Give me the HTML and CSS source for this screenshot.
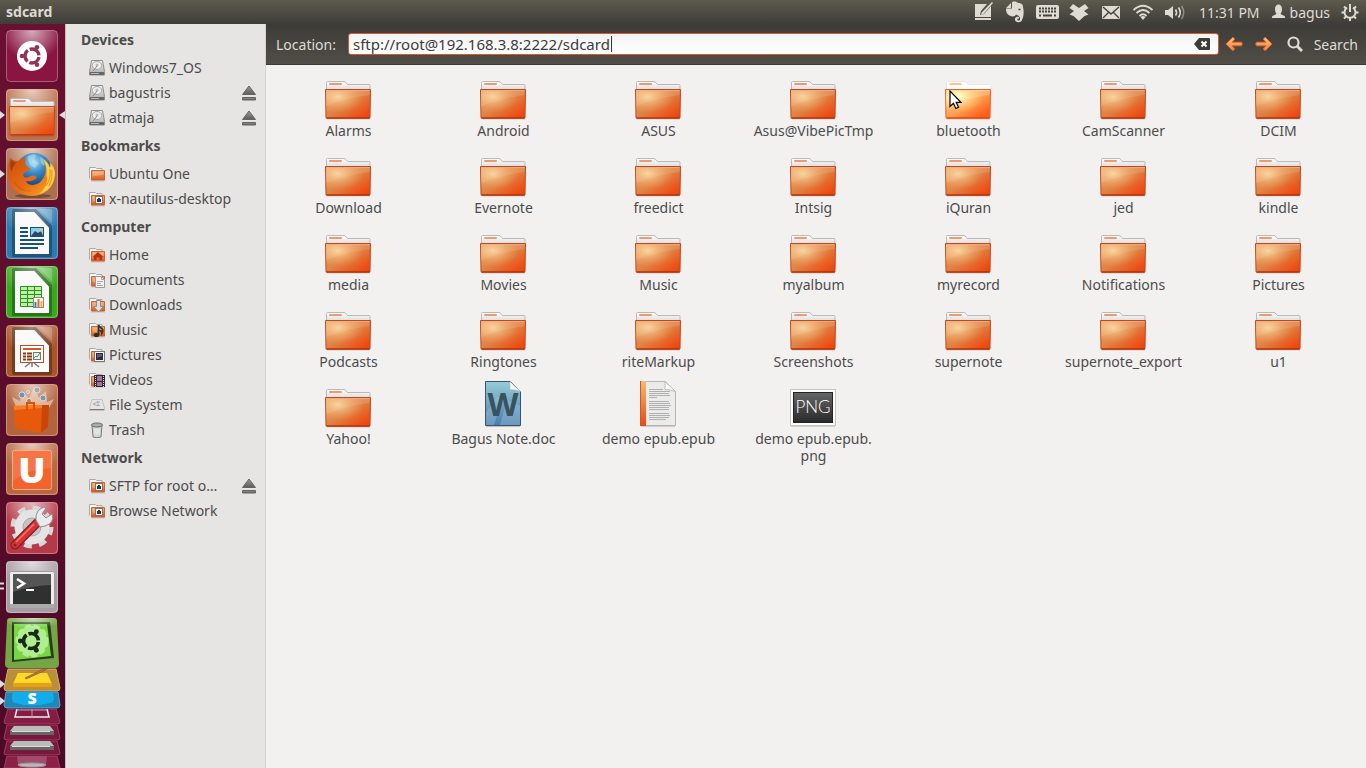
FILE: index.html
```html
<!DOCTYPE html>
<html lang="en">
<head>
  <meta charset="UTF-8">
  <title>sdcard</title>
  <meta name="viewport" content="width=device-width, initial-scale=1.0">
  <link rel="stylesheet" href="styles.css">
</head>
<body>
  <!-- Shared gradients and icons -->
  <svg class="defs" aria-hidden="true">
    <defs>
      <linearGradient id="g-folder" x1="0" y1="0" x2="1" y2="1">
        <stop offset="0" stop-color="#e9a866"/><stop offset=".5" stop-color="#e08143"/><stop offset=".85" stop-color="#ee4e15"/><stop offset="1" stop-color="#d9481a"/>
      </linearGradient>
      <radialGradient id="g-glow" cx=".27" cy=".25" r=".6">
        <stop offset="0" stop-color="#fbdfab" stop-opacity=".85"/><stop offset="1" stop-color="#f5a868" stop-opacity="0"/>
      </radialGradient>
      <linearGradient id="g-tab" x1="0" y1="0" x2="0" y2="1"><stop offset="0" stop-color="#fff"/><stop offset="1" stop-color="#dcdcdc"/></linearGradient>
      <linearGradient id="g-small" x1="0" y1="0" x2="0" y2="1"><stop offset="0" stop-color="#f0a773"/><stop offset="1" stop-color="#dc5a1c"/></linearGradient>
      <linearGradient id="g-metal" x1="0" y1="0" x2="0" y2="1"><stop offset="0" stop-color="#f4f4f4"/><stop offset="1" stop-color="#a9a9a9"/></linearGradient>
      <linearGradient id="g-eject" x1="0" y1="0" x2="0" y2="1"><stop offset="0" stop-color="#999"/><stop offset="1" stop-color="#5c5c5c"/></linearGradient>
      <linearGradient id="g-arrow" x1="0" y1="0" x2="0" y2="1"><stop offset="0" stop-color="#ffc27e"/><stop offset="1" stop-color="#f2803b"/></linearGradient>
      <radialGradient id="g-shine" cx=".5" cy="0" r=".6"><stop offset="0" stop-color="#fff" stop-opacity=".65"/><stop offset="1" stop-color="#fff" stop-opacity="0"/></radialGradient>
      <linearGradient id="g-doc" x1="0" y1="0" x2="0" y2="1"><stop offset="0" stop-color="#97ccd6"/><stop offset="1" stop-color="#4b7daf"/></linearGradient>
      <linearGradient id="g-strip" x1="0" y1="0" x2="0" y2="1"><stop offset="0" stop-color="#f0bd72"/><stop offset="1" stop-color="#e84a12"/></linearGradient>
      <linearGradient id="g-dark" x1="0" y1="0" x2="0" y2="1"><stop offset="0" stop-color="#666"/><stop offset="1" stop-color="#292929"/></linearGradient>
      <radialGradient id="g-globe" cx=".5" cy=".25" r=".7"><stop offset="0" stop-color="#a9dcf2"/><stop offset=".45" stop-color="#3589c6"/><stop offset="1" stop-color="#153c7c"/></radialGradient>
      <linearGradient id="g-fox" x1="0" y1="0" x2="1" y2="1"><stop offset="0" stop-color="#c9500f"/><stop offset=".55" stop-color="#e96b14"/><stop offset="1" stop-color="#fbb226"/></linearGradient>
    </defs>

    <symbol id="folder" viewBox="0 0 48 48" preserveAspectRatio="xMinYMid">
      <path d="M3 46.500h43v1H3z" fill="#000" opacity=".15"/>
      <path d="M2.500 18v-7.500q0-1 1-1h16.500q1 0 2 1.200l1.500 1.800h21.500q1 0 1 1v4.500z" fill="url(#g-tab)" stroke="#b9b9b9"/>
      <rect x="5" y="11" width="13" height="2" rx="1" fill="#eb9b6e"/>
      <path d="M1.500 17.500h45L46 45.500q0 1-1 1H3q-1 0-1-1z" fill="url(#g-folder)" stroke="#c2481d"/>
      <path d="M2 18h44l-.5 5Q23 26 2 34z" fill="#fff" opacity=".12"/>
      <path d="M2 18h44v27H2z" fill="url(#g-glow)"/>
      <path d="M2.500 18.500h43" stroke="#f3ac83" opacity=".8"/>
      <path d="M2.500 45.500h43" stroke="#a8300a" opacity=".7"/>
    </symbol>

    <symbol id="s-folder" viewBox="0 0 16 16">
      <path d="M.5 12.500V1.500h6l1 1h5.500V5" fill="#fafafa" stroke="#a9a9a9"/>
      <path d="M2.500 4.500h13v9.500h-13z" fill="url(#g-small)" stroke="#d0602f"/>
      <path d="M3.500 5.500h11v3l-11 2z" fill="#ffd7a6" opacity=".4"/>
      <path d="M2 15h14" stroke="#8c8c8c" opacity=".4"/>
    </symbol>
    <symbol id="s-remote" viewBox="0 0 16 16">
      <use href="#s-folder"/>
      <rect x="6.500" y="5.500" width="7" height="7" fill="#f4f4f4" stroke="#777"/>
      <path d="M8 8h1V7h2v1h1v3H8z" fill="#333"/>
    </symbol>
    <symbol id="s-home" viewBox="0 0 16 16">
      <use href="#s-folder"/>
      <path d="M9 5l5.500 5H13v3h-2.500v-2.500h-3V13H5v-3H3.500z" fill="#b92f10"/>
    </symbol>
    <symbol id="s-documents" viewBox="0 0 16 16">
      <use href="#s-folder"/>
      <path d="M6.500 4.500h6l3 3v8h-9z" fill="#f2f2f2" stroke="#9b9b9b"/>
      <path d="M12.500 4.500v3h3M8 9.500h6M8 11.500h4M8 13.500h6" fill="none" stroke="#a8a8a8"/>
    </symbol>
    <symbol id="s-downloads" viewBox="0 0 16 16">
      <use href="#s-folder"/>
      <path d="M7.500 3.500h4v6h3l-5 5.500-5-5.500h3z" fill="#dedede" stroke="#8c8c8c"/>
    </symbol>
    <symbol id="s-music" viewBox="0 0 16 16">
      <use href="#s-folder"/>
      <path d="M9.500 13V3q1 2.500 3.500 3.500 1.500 2 0 4.500 0-2-3-3" fill="none" stroke="#333" stroke-width="1.800"/>
      <ellipse cx="7.500" cy="13" rx="2.800" ry="2" fill="#2c2c2c"/>
    </symbol>
    <symbol id="s-pictures" viewBox="0 0 16 16">
      <use href="#s-folder"/>
      <rect x="5.500" y="4.500" width="10" height="10" fill="#f2f2f2" stroke="#777"/>
      <rect x="7" y="6" width="7" height="7" fill="#33283e"/><path d="M8 7h5v2L8 11z" fill="#6a5b78"/>
    </symbol>
    <symbol id="s-videos" viewBox="0 0 16 16">
      <use href="#s-folder"/>
      <rect x="5" y="3" width="11" height="12" fill="#2e2833"/>
      <path d="M8 4h5v5H8zM8 10h5v4H8z" fill="#a374a0"/>
      <path d="M6.500 4v11M14.500 4v11" stroke="#ddd" stroke-dasharray="1 1"/>
    </symbol>
    <symbol id="s-drive" viewBox="0 0 16 16">
      <path d="M2.500.5h11l2 11v3.500H.5v-3.500z" fill="url(#g-metal)" stroke="#8d8d8d"/>
      <ellipse cx="8" cy="5.500" rx="4.800" ry="4" fill="#ededed" stroke="#aaa"/>
      <circle cx="8" cy="5" r="1.500" fill="#bbb"/>
      <path d="M4 11l4-5" stroke="#888"/>
      <path d="M1 12h14v3H1z" fill="#666"/><path d="M2 13.500h8" stroke="#bbb"/>
    </symbol>
    <symbol id="s-filesystem" viewBox="0 0 16 16">
      <path d="M3 2.500h10l2.500 8.500v2.500H.5V11z" fill="#e5e5e5" stroke="#c3c3c3"/>
      <path d="M4 7l5-2.500v4.500zM8 5h3M8 8.500h3" fill="none" stroke="#adadad"/>
      <path d="M1 12.500h14" stroke="#777"/>
    </symbol>
    <symbol id="s-trash" viewBox="0 0 16 16">
      <path d="M3 3h10l-1 12q-4 1.500-8 0z" fill="#d2d3d3" stroke="#7c7f80"/>
      <ellipse cx="8" cy="3" rx="5.500" ry="2" fill="#a9adad" stroke="#6c7071"/>
      <path d="M6 6.500v6M8 6.500v6.500M10 6.500v6" stroke="#f4f4f4"/>
    </symbol>
    <symbol id="eject" viewBox="0 0 16 16">
      <path d="M8 1l6.500 8.500h-13z" fill="url(#g-eject)" stroke="#646464"/>
      <path d="M1.500 12.500h13v2.500h-13z" fill="url(#g-eject)" stroke="#646464"/>
    </symbol>

    <!-- Launcher pieces -->
    <symbol id="gloss" viewBox="0 0 65 59">
      <rect x="6.500" y="3.500" width="51" height="51" rx="4" fill="url(#g-shine)" stroke="#fff" stroke-opacity=".3"/>
    </symbol>
    <symbol id="cof" viewBox="0 0 30 30">
      <circle cx="15" cy="15" r="7" fill="none" stroke="currentColor" stroke-width="3.400" stroke-dasharray="12.700 2" stroke-dashoffset="-1"/>
      <circle cx="5" cy="15" r="2.300" fill="currentColor"/><circle cx="20" cy="6.300" r="2.300" fill="currentColor"/><circle cx="20" cy="23.700" r="2.300" fill="currentColor"/>
    </symbol>
    <symbol id="page" viewBox="0 0 65 59">
      <path d="M14 5h22l16 17v29q0 2-2 2H14q-2 0-2-2V7q0-2 2-2z" fill="#000" opacity=".3"/>
      <path d="M15 8h19l15 16v26H15z" fill="#fafafa"/>
      <path d="M39 5h11q2 0 2 2v12z" fill="#fff" opacity=".2"/>
      <path d="M34 8l15 16" stroke="#fff" opacity=".6"/>
    </symbol>
    <symbol id="pip" viewBox="0 0 5 8"><path d="M0 0l5 4-5 4z" fill="#ddd"/></symbol>
  </svg>

  <header class="panel">
    <h1 class="panel-title">sdcard</h1>
    <div class="indicators">
      <button class="indicator" aria-label="Notes"><svg viewBox="0 0 24 24"><path d="M4 4h12l-6 7-1 4 4-1 7-8v11H4z"/><path d="M21 2l1 1-9.500 11-2.500 1 .7-2.500z"/><path d="M4 19h16" stroke="#dfdbd2" stroke-width="2"/></svg></button>
      <button class="indicator" aria-label="Evernote"><svg viewBox="0 0 24 24"><path d="M3 8l5-5v5zM9 2c3-1 5 0 6 1 3 0 5 1 5 4 1 4 1 9-1 13-1 3-6 3-7 0-.5-3 2-4 4-3v1.500c-2-.5-2.500 2 0 2 2-1 1-4-1-5l-2-1c-1 3-6 2-8 0-2-2-2-4-2-6h6z"/><path d="M15.500 9.500h2" stroke="#45433e" stroke-width="1.500"/></svg></button>
      <button class="indicator" aria-label="Keyboard"><svg viewBox="0 0 24 24"><rect x="1" y="5" width="23" height="14" rx="2"/><path d="M4 8.500h17M4 11.500h17" stroke="#45433e" stroke-width="2" stroke-dasharray="2 1"/><path d="M4 15.500h2m2 0h9m2 0h2" stroke="#45433e" stroke-width="2"/></svg></button>
      <button class="indicator" aria-label="Dropbox"><svg viewBox="0 0 24 24"><path d="M6 4l6 4 6-4 3.500 4-4.500 3 4.500 3.500-4 1.500-5.500 5-5.500-5-4-1.500L7 11 2.500 8z"/></svg></button>
      <button class="indicator" aria-label="Mail"><svg viewBox="0 0 24 24"><rect x="3" y="6" width="18" height="13" rx="1"/><path d="M4 7l8 7 8-7M4 18l6-6M20 18l-6-6" fill="none" stroke="#45433e" stroke-width="1.400"/></svg></button>
      <button class="indicator" aria-label="Wireless network"><svg viewBox="0 0 24 24"><g fill="none" stroke="#dfdbd2" stroke-width="1.800"><path d="M2.500 10Q12 1.500 21.500 10M5.500 13Q12 7 18.500 13M8.500 16Q12 12.500 15.500 16"/></g><path d="M9.500 17q2.500-2 5 0L12 20z"/></svg></button>
      <button class="indicator" aria-label="Sound"><svg viewBox="0 0 24 24"><path d="M2 10h3l5-4v13l-5-4H2z"/><g fill="none" stroke="#dfdbd2" stroke-width="1.600"><path d="M12.500 9.500q2 3 0 6M15.500 7.500q3.500 5 0 10"/><path d="M18.500 6q4.500 6.500 0 13" opacity=".45"/></g></svg></button>
      <button class="indicator clock">11:31 PM</button>
      <button class="indicator user"><svg viewBox="0 0 16 24"><path d="M5 9c0-6 7-6 7 0 0 3-1 4-1.500 5l4 2q1 1 .5 2H2q-.5-1 .5-2l4-2C6 13 5 12 5 9z"/></svg>bagus</button>
      <button class="indicator gear" aria-label="System"><svg viewBox="0 0 18 24"><g fill="none" stroke="#dfdbd2" stroke-width="2"><path d="M6 7.700a5.500 5.500 0 1 0 6 0M9 4v8"/><path d="M.5 12.500h3M14.500 12.500h3M9 18v3M3 6.500l2 2M15 6.500l-2 2M3 18.500l2-2M15 18.500l-2-2"/></g></svg></button>
    </div>
  </header>

  <div class="desktop">
    <nav class="launcher" aria-label="Launcher">
      <button aria-label="Dash"><svg width="65" height="59" viewBox="0 0 65 59"><rect x="6" y="3" width="52" height="52" rx="5" fill="#8a1540"/><use href="#gloss"/><circle cx="32" cy="29" r="15" fill="#fff"/><svg x="17" y="14" width="30" height="30" color="#91345a"><use href="#cof"/></svg></svg></button>
      <button aria-label="Files"><svg width="65" height="59" viewBox="0 0 65 59"><rect x="6" y="3" width="52" height="52" rx="4" fill="#bc714c"/><use href="#gloss"/><use href="#folder" x="8" y="3" width="48" height="48"/><use href="#pip" y="25" width="5" height="8"/><path d="M65 25v8l-6-4z" fill="#ddd"/></svg></button>
      <button aria-label="Firefox"><svg width="65" height="59" viewBox="0 0 65 59"><rect x="6" y="3" width="52" height="52" rx="4" fill="#ad6f50"/><use href="#gloss"/>
        <ellipse cx="33" cy="51" rx="18" ry="2" fill="#000" opacity=".3"/>
        <circle cx="34" cy="26" r="18" fill="url(#g-globe)"/>
        <path d="M27 12q5-4 9-2l-2 5 5 3-4 5-5-3zM40 12l6 4-2 5-3-3z" fill="#c3e6f3" opacity=".5"/>
        <path d="M10 13Q7 24 8 30q2 20 24 21 21-1 23-23-1-7-5-10 1 3 0 5-2-6-7-9 4 8 2 15-3 10-12 11-6 0-7-4 8 1 11-4-4-3-8 0-5 2-6-2 1-3 8-6-5-3-6-6v-6q-5 2-7 4-5 0-8-3z" fill="url(#g-fox)"/>
        <path d="M43 14q5 3 7 9 1-2 0-5 4 3 5 10-1 17-16 21 10-8 8-19l-1 3q2-11-3-19z" fill="#fbd04a"/>
        <path d="M50 24q1 10-4 17M52 25q1 9-3 16" fill="none" stroke="#e98c1c"/>
        <path d="M11 15l5 3q-4 4-4 9-3-5-1-12z" fill="#a83c0c"/>
        <path d="M14 36q6 10 18 10-8 1-13-3t-5-7z" fill="#b94a0c" opacity=".5"/>
        <use href="#pip" y="25" width="5" height="8"/></svg></button>
      <button aria-label="LibreOffice Writer"><svg width="65" height="59" viewBox="0 0 65 59"><rect x="6" y="3" width="52" height="52" rx="4" fill="#2b7bb0"/><use href="#gloss"/><use href="#page"/><path d="M20 24h8M20 28h8M20 32h8M20 36h24M20 40h24M20 44h18" stroke="#15517c" stroke-width="2"/><rect x="30.500" y="23.500" width="13" height="9" fill="#8ecbf0" stroke="#15517c"/><path d="M31 32l4-5 3 2 3-2 2 5z" fill="#214c64"/><circle cx="41" cy="26" r="1.500" fill="#ffc240"/></svg></button>
      <button aria-label="LibreOffice Calc"><svg width="65" height="59" viewBox="0 0 65 59"><rect x="6" y="3" width="52" height="52" rx="4" fill="#38a91f"/><use href="#gloss"/><use href="#page"/><path d="M20.500 23.500h21v20h-21zM20 27.500h22M20 31.500h22M20 35.500h22M20 39.500h22M27.500 23v21M34.500 23v21" fill="#bcf0a8" stroke="#2a9216"/><rect x="33.500" y="34.500" width="10" height="10" fill="#fff" stroke="#888"/><path d="M34.500 39h2v5h-2z" fill="#2d7ec1"/><path d="M37.500 36h2v8h-2z" fill="#e46a25"/><path d="M40.500 38h2v6h-2z" fill="#efad38"/></svg></button>
      <button aria-label="LibreOffice Impress"><svg width="65" height="59" viewBox="0 0 65 59"><rect x="6" y="3" width="52" height="52" rx="4" fill="#a9552a"/><use href="#gloss"/><use href="#page"/><rect x="20.500" y="23.500" width="23" height="17" fill="#fff" stroke="#b84d1b"/><path d="M23 27h18" stroke="#d15b21" stroke-width="2"/><path d="M23 31.500h3m1 0h5M23 34.500h3m1 0h5M23 37.500h3m1 0h5" stroke="#8e3510" stroke-width="2"/><rect x="33.500" y="30.500" width="7" height="7" fill="#eee" stroke="#777"/><path d="M34 36l2-2 1 1 3-4" fill="none" stroke="#38a927"/><path d="M32 41v4M30 41l-5 4M34 41l5 4" stroke="#777" stroke-width="1.500"/></svg></button>
      <button aria-label="Software Center"><svg width="65" height="59" viewBox="0 0 65 59"><rect x="6" y="3" width="52" height="52" rx="4" fill="#b3643e"/><use href="#gloss"/>
        <path d="M16 26l-4-10 8 4 2-10 7 7 5-11 5 11 7-7 1 11 7-3-5 9z" fill="#ffe9d0" opacity=".5"/>
        <g stroke="#edf4f7" stroke-width=".7"><circle cx="22" cy="14" r="3" fill="#6a96b4"/><circle cx="37" cy="9" r="3" fill="#a1aab0"/><circle cx="43" cy="17" r="3" fill="#779aac"/><circle cx="29" cy="20" r="2.500" fill="#ad7d67"/><circle cx="28" cy="11" r="1.500" fill="#d3a895"/></g>
        <path d="M14 25l35-1-1 22-7 6-26-5z" fill="#e75a0c"/><path d="M42 24h7l-1 22-7 6z" fill="#c94609"/><path d="M14 25l28-1v3l-28 2z" fill="#fb7a25"/>
        <path d="M27 30v-8h7v7" fill="none" stroke="#e45000" stroke-width="2"/></svg></button>
      <button aria-label="Ubuntu One"><svg width="65" height="59" viewBox="0 0 65 59"><rect x="6" y="3" width="52" height="52" rx="4" fill="#b96841"/><use href="#gloss"/><rect x="12.500" y="10.500" width="39" height="39" rx="2" fill="#f4622d" stroke="#ffae7e"/><path d="M13 11h38v17q-23 1-38 13z" fill="#fff" opacity=".12"/><text class="u-logo" x="32" y="43" text-anchor="middle">U</text></svg></button>
      <button aria-label="System Settings"><svg width="65" height="59" viewBox="0 0 65 59"><rect x="6" y="3" width="52" height="52" rx="4" fill="#b53a49"/><use href="#gloss"/>
        <circle cx="32" cy="28" r="18.500" fill="none" stroke="#d6d8d8" stroke-width="6" stroke-dasharray="7.500 7.030"/>
        <circle cx="32" cy="28" r="13" fill="none" stroke="#e4e4e4" stroke-width="9"/><circle cx="32" cy="28" r="9" fill="#c5c5c5" stroke="#a7a7a7"/>
        <path d="M15 46l22-22" stroke="#8d1d1f" stroke-width="9" stroke-linecap="round"/><path d="M15 46l22-22" stroke="#d53334" stroke-width="6.500" stroke-linecap="round"/><path d="M16 43l18-18" stroke="#f07a73" stroke-width="1.500"/>
        <path d="M36 21q-1-10 8-13l2 1-4 6 4 4 6-4q3 9-7 12l-5 1z" fill="#ebebeb" stroke="#8e8e8e"/><circle cx="15" cy="46" r="1.500" fill="#911f20"/></svg></button>
      <button aria-label="Terminal"><svg width="65" height="59" viewBox="0 0 65 59"><rect x="6" y="3" width="52" height="52" rx="4" fill="#a79ca3"/><use href="#gloss"/><rect x="9.500" y="13.500" width="45" height="36" rx="2" fill="#eee" stroke="#9b9b9b"/><path d="M10 46h44v4H10z" fill="#aaa"/><rect x="13" y="16" width="38" height="30" fill="#303030"/><path d="M13 16h38v11q-22 1-38 7z" fill="#555"/><path d="M17 21l7 4.500-7 4.500" fill="none" stroke="#fff" stroke-width="2.500"/><path d="M26 32h8" stroke="#fff" stroke-width="2"/><path d="M0 25.500h4M0 30.500h4" stroke="#ddd" stroke-width="2"/></svg></button>
      <!-- Folded tiles at the bottom of the launcher -->
      <button aria-label="Ubuntu Tweak"><svg width="65" height="51" viewBox="0 0 65 51"><path d="M10 1h44q3 0 3 3l2 43q0 4-4 4H9q-4 0-4-4L7 4q0-3 3-3z" fill="#75a645"/><path d="M12 5h38l4 36-42 4z" fill="#273d1b"/><path d="M14 7h33l4 32-37 4z" fill="#77d642"/><circle cx="32" cy="24" r="15" fill="#b0ee91" stroke="#b0ee91" stroke-width="3" stroke-dasharray="6 3"/><svg x="15" y="8" width="32" height="32" color="#1b2816"><use href="#cof"/></svg><path d="M10 1h44q3 0 3 3l1 15H7L8 4q0-3 2-3z" fill="url(#g-shine)"/></svg></button>
      <button aria-label="Sticky Notes"><svg width="65" height="24" viewBox="0 0 65 24"><path d="M8 1h48l4 19q0 3-3 3H7q-3 0-3-3z" fill="#b8903c" stroke="#d1af62"/><path d="M18 5h29l5 11H13z" fill="#ffd927"/><path d="M13 15h39v4H13z" fill="#e9a013"/><path d="M25 10l18-9 5-1-4 3-18 8z" fill="#bb7742" stroke="#6f4428" stroke-width=".5"/><use href="#pip" y="12" width="5" height="8"/></svg></button>
      <button aria-label="Skype"><svg class="skype" width="65" height="17" viewBox="0 0 65 17"><path d="M6 0h52l2 13q0 3-3 3H7q-3 0-3-3z" fill="#2386b4" stroke="#4fa6ce"/><path d="M13 0h39q5 9-2 11-18 5-35 0-5-2-2-11z" fill="#10acec"/><text class="s-logo" x="32" y="12" text-anchor="middle">S</text><use href="#pip" y="5" width="5" height="8"/></svg></button>
      <button aria-label="Workspaces"><svg width="65" height="16" viewBox="0 0 65 16"><path d="M8 0h48l4 13q0 2-3 2H7q-3 0-3-2z" fill="#851c44" stroke="#a13d60"/><path d="M17 0l-2 8h34l-2-8" fill="none" stroke="#eee" stroke-width="1.500"/><path d="M32 0v8M17 1h30" stroke="#c99aae"/></svg></button>
      <button aria-label="Drive"><svg width="65" height="16" viewBox="0 0 65 16"><path d="M7 0h50l3 13q0 2-3 2H7q-3 0-3-2z" fill="#7a173d" stroke="#a13d60"/><path d="M14 1h36l4 5H10z" fill="#bbb"/><path d="M10 6h44v4H10z" fill="#666"/><path d="M12 6.500h38" stroke="#ddd"/></svg></button>
      <button aria-label="Drive"><svg width="65" height="15" viewBox="0 0 65 15"><path d="M7 0h50l3 12q0 2-3 2H7q-3 0-3-2z" fill="#7a173d" stroke="#a13d60"/><path d="M14 0h36l4 5H10z" fill="#bbb"/><path d="M10 5h44v4H10z" fill="#666"/><path d="M12 5.500h38" stroke="#ddd"/></svg></button>
      <button aria-label="Trash"><svg width="65" height="12" viewBox="0 0 65 12"><path d="M7 0h50l3 12H4z" fill="#8c2148" stroke="#a13d60"/><path d="M17 0h30l-1 9H18z" fill="#a04d6c"/><ellipse cx="32" cy="9" rx="14" ry="2" fill="#c1b3b9" stroke="#999"/></svg></button>
    </nav>

    <aside class="sidebar">
      <section>
        <h2>Devices</h2>
        <ul>
          <li><a href="#"><svg><use href="#s-drive"/></svg><span>Windows7_OS</span></a></li>
          <li><a href="#"><svg><use href="#s-drive"/></svg><span>bagustris</span></a><button aria-label="Eject bagustris"><svg><use href="#eject"/></svg></button></li>
          <li><a href="#"><svg><use href="#s-drive"/></svg><span>atmaja</span></a><button aria-label="Eject atmaja"><svg><use href="#eject"/></svg></button></li>
        </ul>
      </section>
      <section>
        <h2>Bookmarks</h2>
        <ul>
          <li><a href="#"><svg><use href="#s-folder"/></svg><span>Ubuntu One</span></a></li>
          <li><a href="#"><svg><use href="#s-remote"/></svg><span>x-nautilus-desktop</span></a></li>
        </ul>
      </section>
      <section>
        <h2>Computer</h2>
        <ul>
          <li><a href="#"><svg><use href="#s-home"/></svg><span>Home</span></a></li>
          <li><a href="#"><svg><use href="#s-documents"/></svg><span>Documents</span></a></li>
          <li><a href="#"><svg><use href="#s-downloads"/></svg><span>Downloads</span></a></li>
          <li><a href="#"><svg><use href="#s-music"/></svg><span>Music</span></a></li>
          <li><a href="#"><svg><use href="#s-pictures"/></svg><span>Pictures</span></a></li>
          <li><a href="#"><svg><use href="#s-videos"/></svg><span>Videos</span></a></li>
          <li><a href="#"><svg><use href="#s-filesystem"/></svg><span>File System</span></a></li>
          <li><a href="#"><svg><use href="#s-trash"/></svg><span>Trash</span></a></li>
        </ul>
      </section>
      <section>
        <h2>Network</h2>
        <ul>
          <li><a href="#"><svg><use href="#s-remote"/></svg><span>SFTP for root o…</span></a><button aria-label="Eject SFTP"><svg><use href="#eject"/></svg></button></li>
          <li><a href="#"><svg><use href="#s-remote"/></svg><span>Browse Network</span></a></li>
        </ul>
      </section>
    </aside>

    <main class="window">
      <form class="toolbar">
        <label for="location">Location:</label>
        <div class="location">
          <input id="location" type="text" value="sftp://root@192.168.3.8:2222/sdcard">
          <button class="clear" type="button" aria-label="Clear"><svg viewBox="0 0 16 12"><path d="M5 0h10q1 0 1 1v10q0 1-1 1H5L0 6z" fill="#3c3b37"/><path d="M7.500 3.500l5 5M12.500 3.500l-5 5" stroke="#fff" stroke-width="2"/></svg></button>
        </div>
        <button class="nav" type="button" aria-label="Back"><svg viewBox="0 0 18 16"><path d="M1 8l6.500-6.500q2 0 2 2L7 6.200h9.500q1.500 1.800 0 3.600H7l2.500 2.700q0 2-2 2z" fill="url(#g-arrow)" stroke="#e0662b"/></svg></button>
        <button class="nav" type="button" aria-label="Forward"><svg viewBox="0 0 18 16"><path d="M17 8l-6.500-6.500q-2 0-2 2L11 6.200H1.500q-1.500 1.800 0 3.600H11l-2.500 2.700q0 2 2 2z" fill="url(#g-arrow)" stroke="#e0662b"/></svg></button>
        <button class="search" type="button"><svg viewBox="0 0 16 16"><circle cx="6.500" cy="6.500" r="5" fill="none" stroke="#dfdbd2" stroke-width="2.200"/><path d="M10 10l5 5" stroke="#dfdbd2" stroke-width="3"/></svg>Search</button>
      </form>

      <ul class="files">
        <li><a href="#"><svg><use href="#folder"/></svg><span>Alarms</span></a></li>
        <li><a href="#"><svg><use href="#folder"/></svg><span>Android</span></a></li>
        <li><a href="#"><svg><use href="#folder"/></svg><span>ASUS</span></a></li>
        <li><a href="#"><svg><use href="#folder"/></svg><span>Asus@VibePicTmp</span></a></li>
        <li class="hovered"><a href="#"><svg><use href="#folder"/></svg><span>bluetooth</span></a>
          <svg class="pointer" viewBox="0 0 13 20"><path d="M1 1v15.500l3.500-3.200 2.300 5.200 2.700-1.200-2.300-5H12z" fill="#fff" stroke="#000" stroke-width="1.200"/></svg></li>
        <li><a href="#"><svg><use href="#folder"/></svg><span>CamScanner</span></a></li>
        <li><a href="#"><svg><use href="#folder"/></svg><span>DCIM</span></a></li>
        <li><a href="#"><svg><use href="#folder"/></svg><span>Download</span></a></li>
        <li><a href="#"><svg><use href="#folder"/></svg><span>Evernote</span></a></li>
        <li><a href="#"><svg><use href="#folder"/></svg><span>freedict</span></a></li>
        <li><a href="#"><svg><use href="#folder"/></svg><span>Intsig</span></a></li>
        <li><a href="#"><svg><use href="#folder"/></svg><span>iQuran</span></a></li>
        <li><a href="#"><svg><use href="#folder"/></svg><span>jed</span></a></li>
        <li><a href="#"><svg><use href="#folder"/></svg><span>kindle</span></a></li>
        <li><a href="#"><svg><use href="#folder"/></svg><span>media</span></a></li>
        <li><a href="#"><svg><use href="#folder"/></svg><span>Movies</span></a></li>
        <li><a href="#"><svg><use href="#folder"/></svg><span>Music</span></a></li>
        <li><a href="#"><svg><use href="#folder"/></svg><span>myalbum</span></a></li>
        <li><a href="#"><svg><use href="#folder"/></svg><span>myrecord</span></a></li>
        <li><a href="#"><svg><use href="#folder"/></svg><span>Notifications</span></a></li>
        <li><a href="#"><svg><use href="#folder"/></svg><span>Pictures</span></a></li>
        <li><a href="#"><svg><use href="#folder"/></svg><span>Podcasts</span></a></li>
        <li><a href="#"><svg><use href="#folder"/></svg><span>Ringtones</span></a></li>
        <li><a href="#"><svg><use href="#folder"/></svg><span>riteMarkup</span></a></li>
        <li><a href="#"><svg><use href="#folder"/></svg><span>Screenshots</span></a></li>
        <li><a href="#"><svg><use href="#folder"/></svg><span>supernote</span></a></li>
        <li><a href="#"><svg><use href="#folder"/></svg><span>supernote_export</span></a></li>
        <li><a href="#"><svg><use href="#folder"/></svg><span>u1</span></a></li>
        <li><a href="#"><svg><use href="#folder"/></svg><span>Yahoo!</span></a></li>
        <li><a href="#"><svg viewBox="0 0 48 48" preserveAspectRatio="xMinYMid"><path d="M6.500 1.500h25l10 10v34h-35z" fill="url(#g-doc)" stroke="#35566c"/><path d="M7 33l11-17 5 4-8 25H7zM21 45l7-25 13 6v19z" fill="#a9c8dd" opacity=".35"/><text class="doc-letter" x="24" y="36" text-anchor="middle">W</text><path d="M31 1.500v8q5 0 10.500 2z" fill="#f4f4f4" stroke="#bbb" stroke-width=".5"/><path d="M7 46.500h34" stroke="#000" opacity=".2"/></svg><span>Bagus Note.doc</span></a></li>
        <li><a href="#"><svg viewBox="0 0 48 48" preserveAspectRatio="xMinYMid"><path d="M6.500 1.500h25l10 10v34h-35z" fill="#ebebeb" stroke="#b5b5b5"/><path d="M6 1h6v45H6z" fill="url(#g-strip)"/><path d="M6.500 1v45" stroke="#c95a2a"/><path d="M15 9.500h14M15 11.500h21M15 13.500h20M15 15.500h21M15 17.500h8M15 21.500h20M15 23.500h21M15 25.500h22M15 27.500h20M15 29.500h20M15 33.500h20M15 35.500h21M15 37.500h20M15 39.500h17" stroke="#b0b0b0"/><path d="M31 1.500v8q5 0 10.500 2z" fill="#fff" stroke="#bbb"/><path d="M7 46.500h34" stroke="#000" opacity=".15"/></svg><span>demo epub.epub</span></a></li>
        <li><a href="#"><svg viewBox="0 0 48 48" preserveAspectRatio="xMinYMid"><rect x="1.500" y="9.500" width="45" height="36" fill="#fcfcfc" stroke="#c5c5c5"/><rect x="4.500" y="12.500" width="39" height="30" fill="url(#g-dark)" stroke="#222"/><text class="png-text" x="24" y="33" text-anchor="middle">PNG</text><path d="M2 46.500h44" stroke="#000" opacity=".12"/></svg><span>demo epub.epub.<br>png</span></a></li>
      </ul>
    </main>
  </div>
</body>
</html>
```
FILE: styles.css
```css
* { box-sizing: border-box; }
body {
  margin: 0;
  height: 100vh;
  display: flex;
  flex-direction: column;
  overflow: hidden;
  font: 14px/17px "Noto Sans", sans-serif;
  color: #4c4c4c;
  background: #f2f1f0;
}
button { padding: 0; border: none; background: none; font: inherit; color: inherit; }
a { color: inherit; text-decoration: none; }
ul { margin: 0; padding: 0; list-style: none; }
.defs { position: absolute; width: 0; height: 0; }

/* Top panel */
.panel {
  flex: none;
  height: 24px;
  display: flex;
  align-items: center;
  justify-content: space-between;
  padding: 0 7px 0 6px;
  color: #dfdbd2;
  background: linear-gradient(#5d5a4e, #3e3d39);
}
.panel-title { margin: 0; font-size: 14px; line-height: 24px; }
.indicators { display: flex; align-items: center; gap: 8px; }
.indicator { display: flex; align-items: center; height: 24px; }
.indicator svg { width: 24px; height: 24px; fill: #dfdbd2; }
.clock { padding-left: 4px; }
.user { gap: 4px; padding-left: 2px; }
.user svg { width: 16px; }
.gear { padding-left: 3px; }
.gear svg { width: 18px; }

.desktop { flex: 1; min-height: 0; display: flex; }

/* Launcher */
.launcher {
  flex: none;
  width: 66px;
  padding-top: 3px;
  display: flex;
  flex-direction: column;
  overflow: hidden;
  background: linear-gradient(#6a1030, #4a0a25);
  border-right: 1px solid #c5bdc1;
}
.launcher button { flex: none; display: block; }
.launcher svg { display: block; }
.launcher .skype { overflow: visible; }
.u-logo { font: 900 36px "Noto Sans", sans-serif; fill: #fff; }
.s-logo { font: 900 16px "Noto Sans", sans-serif; fill: #fff; }

/* Places */
.sidebar {
  flex: none;
  width: 200px;
  background: #e6e5e3;
  border-right: 1px solid #d3d2d0;
}
.sidebar h2 { margin: 0; padding-left: 15px; font-size: 14px; line-height: 31px; }
.sidebar li { display: flex; align-items: center; height: 25px; padding: 0 8px 0 23px; }
.sidebar li a { flex: 1; display: flex; align-items: center; gap: 4px; white-space: nowrap; }
.sidebar li svg { display: block; width: 16px; height: 16px; }

/* File window */
.window { flex: 1; min-width: 0; }
.toolbar {
  height: 41px;
  display: flex;
  align-items: center;
  padding: 0 8px 0 10px;
  color: #dfdbd2;
  background: linear-gradient(#3c3b37, #504e47);
  border-bottom: 1px solid #3a3935;
}
.toolbar label { width: 72px; }
.location { position: relative; flex: 1; }
.location input {
  display: block;
  width: 100%;
  height: 22px;
  padding: 0 32px 0 4px;
  font: inherit;
  font-size: 15px;
  color: #3c3c3c;
  border: 1px solid #d8582e;
  border-radius: 3px;
  outline: none;
  /* the first layer is the text cursor */
  background: linear-gradient(#333, #333) 262px center / 1px 16px no-repeat, linear-gradient(#f3f3f3, #fff);
}
.clear { position: absolute; right: 9px; top: 5px; }
.clear svg { display: block; width: 16px; height: 12px; }
.nav { width: 30px; }
.nav svg { display: block; margin: 0 auto; width: 18px; height: 16px; }
.search { display: flex; align-items: center; gap: 11px; padding-left: 8px; }
.search svg { width: 16px; height: 16px; }

.files {
  display: grid;
  grid-template-columns: repeat(auto-fill, 155px);
  row-gap: 10px;
  padding: 7px 5px;
}
.files li { position: relative; }
.files a { display: flex; flex-direction: column; align-items: center; gap: 2px; text-align: center; }
.files a svg { width: 49px; height: 48px; }
.hovered a svg { filter: brightness(1.25); }
.pointer { position: absolute; left: 58px; top: 18px; width: 13px; height: 20px; }
.doc-letter { font: bold 32px "Noto Sans", sans-serif; fill: #38525e; }
.png-text { font: 300 17px Lato, sans-serif; fill: #fff; }
```
